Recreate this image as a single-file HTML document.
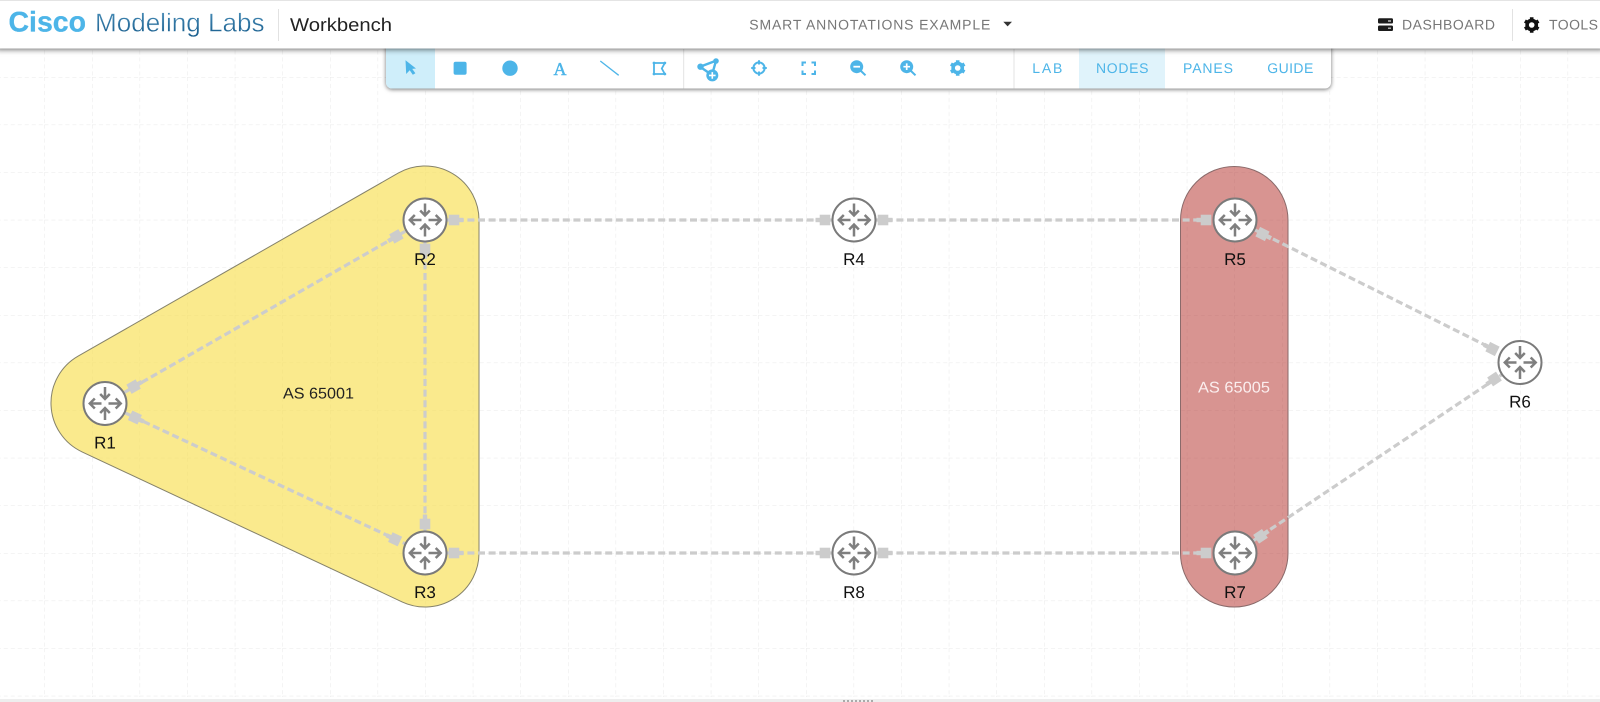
<!DOCTYPE html>
<html lang="en">
<head>
<meta charset="utf-8">
<title>Cisco Modeling Labs Workbench</title>
<style>
html,body{margin:0;padding:0;width:1600px;height:702px;overflow:hidden;background:#fff}
svg{display:block;position:absolute;left:0;top:0}
text{font-family:"Liberation Sans",sans-serif;text-rendering:geometricPrecision}
</style>
</head>
<body>
<svg width="1600" height="702" viewBox="0 0 1600 702" xmlns="http://www.w3.org/2000/svg">
<defs>
<pattern id="grid" patternUnits="userSpaceOnUse" x="44.4" y="29.4" width="47.6" height="47.6">
<path d="M0 0V47.6M0 0H47.6" stroke="#e8e8e8" stroke-width="1" stroke-dasharray="4 3" fill="none"/>
</pattern>
<symbol id="router" overflow="visible" viewBox="-24 -24 48 48" width="48" height="48">
<circle r="21.5" fill="#fff" stroke="#7a7a7a" stroke-width="2"/>
<path d="M0-16.5V-4.5M-4.8-9.5L0-4.5 4.8-9.5M0 16.5V4.5M-4.8 9.5L0 4.5 4.8 9.5M-3.5 0H-15M-10.2-5L-15.2 0-10.2 5M3.5 0H15.5M10.7-5L15.7 0 10.7 5" fill="none" stroke="#7f7f7f" stroke-width="2.5"/>
</symbol>
<g id="cap"><rect x="-5.3" y="-5.3" width="10.6" height="10.6" fill="#ccc"/><rect x="4" y="-2.2" width="5.5" height="4.4" fill="#ccc"/></g>
<g id="gear">
<circle r="4.6" fill="none" stroke="currentColor" stroke-width="3.6"/>
<path d="M0-4.5V-7.8M0 4.5V7.8M3.9-2.25L6.8-3.9M-3.9 2.25L-6.8 3.9M3.9 2.25L6.8 3.9M-3.9-2.25L-6.8-3.9" stroke="currentColor" stroke-width="3.6" fill="none"/>
</g>
<linearGradient id="lg" x1="0" y1="0" x2="0" y2="1"><stop offset="0" stop-color="#4f93bd"/><stop offset="1" stop-color="#145a8a"/></linearGradient>
</defs>

<rect width="1600" height="702" fill="#fff"/>
<rect width="1600" height="697" fill="url(#grid)"/>

<path d="M78.2 356.1L398.2 173.1A54 54 0 0 1 479 220V553A54 54 0 0 1 402.1 601.9L82.1 451.9A54 54 0 0 1 78.2 356.1Z" fill="#f8de50" fill-opacity=".65" stroke="#85826a" stroke-width="1"/>
<rect x="1180.5" y="166.5" width="107.5" height="440.5" rx="53.7" fill="#b4322d" fill-opacity=".52" stroke="#8a6a6a" stroke-width="1"/>

<g stroke="#ccc" stroke-width="3.2" stroke-dasharray="7 3.6" fill="none">
<path d="M105 403.5L425 220"/>
<path d="M105 403.5L425 553"/>
<path d="M425 220V553"/>
<path d="M425 220H854"/>
<path d="M854 220H1235"/>
<path d="M425 553H854"/>
<path d="M854 553H1235"/>
<path d="M1235 220L1520 362.5"/>
<path d="M1235 553L1520 362.5"/>
</g>

<use href="#cap" transform="translate(133.6 386.6) rotate(-29.8)"/>
<use href="#cap" transform="translate(396.4 236.4) rotate(150.2)"/>
<use href="#cap" transform="translate(134.9 417.5) rotate(25.1)"/>
<use href="#cap" transform="translate(395.1 539.3) rotate(205.1)"/>
<use href="#cap" transform="translate(425 249) rotate(90)"/>
<use href="#cap" transform="translate(425 524) rotate(-90)"/>
<use href="#cap" transform="translate(454 220)"/>
<use href="#cap" transform="translate(825 220) rotate(180)"/>
<use href="#cap" transform="translate(883 220)"/>
<use href="#cap" transform="translate(1206 220) rotate(180)"/>
<use href="#cap" transform="translate(454 553)"/>
<use href="#cap" transform="translate(825 553) rotate(180)"/>
<use href="#cap" transform="translate(883 553)"/>
<use href="#cap" transform="translate(1206 553) rotate(180)"/>
<use href="#cap" transform="translate(1262.5 234) rotate(26.4)"/>
<use href="#cap" transform="translate(1492.5 349) rotate(206.4)"/>
<use href="#cap" transform="translate(1260.5 536.3) rotate(-33.8)"/>
<use href="#cap" transform="translate(1494.5 379) rotate(146.2)"/>

<use href="#router" x="81" y="379.5"/>
<use href="#router" x="401" y="196"/>
<use href="#router" x="401" y="529"/>
<use href="#router" x="830" y="196"/>
<use href="#router" x="830" y="529"/>
<use href="#router" x="1211" y="196"/>
<use href="#router" x="1211" y="529"/>
<use href="#router" x="1496" y="338.5"/>

<g font-size="17" fill="#111" text-anchor="middle">
<text x="105" y="448.5">R1</text>
<text x="425" y="265">R2</text>
<text x="425" y="598">R3</text>
<text x="854" y="265">R4</text>
<text x="854" y="598">R8</text>
<text x="1235" y="265">R5</text>
<text x="1235" y="598">R7</text>
<text x="1520" y="407.5">R6</text>
</g>
<text x="283" y="398.5" font-size="15.5" fill="#222" textLength="71" lengthAdjust="spacingAndGlyphs">AS 65001</text>
<text x="1198" y="392.5" font-size="15.5" fill="#fbeeee" textLength="72" lengthAdjust="spacingAndGlyphs">AS 65005</text>

<!-- bottom bar -->
<rect x="0" y="699" width="1600" height="3" fill="#eee"/>
<path d="M843 701H874" stroke="#aaa" stroke-width="2" stroke-dasharray="2 2"/>

<!-- toolbar -->
<path d="M386 44H1331V82.5A6 6 0 0 1 1325 88.5H392A6 6 0 0 1 386 82.5Z" fill="#fff" style="filter:drop-shadow(0 1px 2px rgba(0,0,0,.55))"/>
<path d="M386 44H435V88.5H392A6 6 0 0 1 386 82.5Z" fill="#cfeefa"/>
<rect x="1079" y="44" width="86" height="44.5" fill="#e0f3fb"/>
<path d="M683.7 49V88.5M1014 49V88.5" stroke="#e3e3e3" stroke-width="1"/>

<g fill="#4db5e8" stroke="none">
<path d="M405.5 60.3L416 68.5 412.2 68.9 415.4 73.2 412.8 74.8 409.7 70.2 406.2 74Z"/>
<rect x="453.6" y="61.7" width="13" height="13" rx="2"/>
<circle cx="510" cy="68.2" r="7.7"/>
<text x="560" y="75" font-size="18" text-anchor="middle" stroke="#4db5e8" stroke-width=".5" style="font-family:'Liberation Serif',serif">A</text>
</g>
<path d="M600.3 61L618.7 75.3" stroke="#4db5e8" stroke-width="1.3" fill="none"/>
<g fill="#4db5e8" stroke="#4db5e8">
<path d="M654 63L664.8 63 661.8 68.5 664.8 74 654 74Z" fill="none" stroke-width="1.8"/>
<circle cx="654" cy="63" r="1.4" stroke="none"/><circle cx="664.8" cy="63" r="1.4" stroke="none"/><circle cx="654" cy="74" r="1.4" stroke="none"/><circle cx="664.8" cy="74" r="1.4" stroke="none"/>
</g>

<!-- add node -->
<g fill="#4db5e8" stroke="#4db5e8">
<path d="M700 66.7L716 60.7 712 75ZM700 66.7L712 75" fill="none" stroke-width="2.4"/>
<circle cx="700.5" cy="66.7" r="3.2" stroke="none"/>
<circle cx="716" cy="61" r="2.8" stroke="none"/>
<circle cx="712.3" cy="75.4" r="6" stroke="none"/>
<path d="M709 75.4H715.6M712.3 72.1V78.7" stroke="#fff" stroke-width="1.6"/>
</g>
<!-- target -->
<g fill="none" stroke="#4db5e8" stroke-width="2">
<circle cx="759" cy="68" r="5.6"/>
<path d="M759 60.2V64.5M759 71.5V75.8M751.2 68H755.5M762.5 68H766.8"/>
<!-- fullscreen -->
<path d="M802.5 66V62.5H806M811.5 62.5H815V66M815 70.5V74H811.5M806 74H802.5V70.5"/>
</g>
<!-- zoom out / in -->
<g fill="#4db5e8" stroke="#4db5e8">
<circle cx="856.7" cy="66.7" r="6.5" stroke="none"/>
<path d="M861 71L865.5 75.3" stroke-width="2" fill="none"/>
<path d="M853.4 66.7H860" stroke="#fff" stroke-width="1.8"/>
<circle cx="906.7" cy="66.7" r="6.5" stroke="none"/>
<path d="M911 71L915.5 75.3" stroke-width="2" fill="none"/>
<path d="M903.4 66.7H910M906.7 63.4V70" stroke="#fff" stroke-width="1.7"/>
</g>
<use href="#gear" transform="translate(957.7 68)" style="color:#4db5e8"/>

<g font-size="14" fill="#4db5e8">
<text x="1032.3" y="73" textLength="30" lengthAdjust="spacing">LAB</text>
<text x="1096" y="73" textLength="52.5" lengthAdjust="spacing">NODES</text>
<text x="1183" y="73" textLength="50" lengthAdjust="spacing">PANES</text>
<text x="1267.3" y="73" textLength="46" lengthAdjust="spacing">GUIDE</text>
</g>

<!-- header -->
<rect x="-4" y="1" width="1608" height="47.5" fill="#fff" style="filter:drop-shadow(0 1px 3px rgba(0,0,0,.6))"/>
<rect x="0" y="0" width="1600" height="1" fill="#e4e4e4"/>
<text x="8.5" y="31.5" font-size="28.5" font-weight="700" fill="#4db5e8" stroke="#4db5e8" stroke-width=".3" textLength="77.5" lengthAdjust="spacingAndGlyphs">Cisco</text>
<text x="95" y="31.5" font-size="26" fill="url(#lg)" stroke="#fff" stroke-width=".4" textLength="169.5" lengthAdjust="spacingAndGlyphs">Modeling Labs</text>
<rect x="278" y="9" width="1" height="32" fill="#e2e2e2"/>
<text x="290" y="31" font-size="18.5" fill="#222" textLength="102" lengthAdjust="spacingAndGlyphs">Workbench</text>
<text x="749.3" y="29.3" font-size="14" fill="#777" textLength="241" lengthAdjust="spacing">SMART ANNOTATIONS EXAMPLE</text>
<path d="M1003.3 21.7H1012L1007.6 26.4Z" fill="#333"/>

<g fill="#1b1b1b">
<rect x="1378" y="18.3" width="15" height="5.2" rx="1.4"/>
<rect x="1378" y="25.5" width="15" height="5.5" rx="1.4"/>
<path d="M1388 21H1391M1388 28.2H1391" stroke="#ddd" stroke-width="1.2"/>
</g>
<text x="1402" y="29.3" font-size="14" fill="#777" textLength="93" lengthAdjust="spacing">DASHBOARD</text>
<rect x="1512" y="9" width="1" height="32" fill="#e2e2e2"/>
<use href="#gear" transform="translate(1531.7 25)" style="color:#111"/>
<text x="1549" y="29.3" font-size="14" fill="#777" textLength="49" lengthAdjust="spacing">TOOLS</text>
</svg>
</body>
</html>
